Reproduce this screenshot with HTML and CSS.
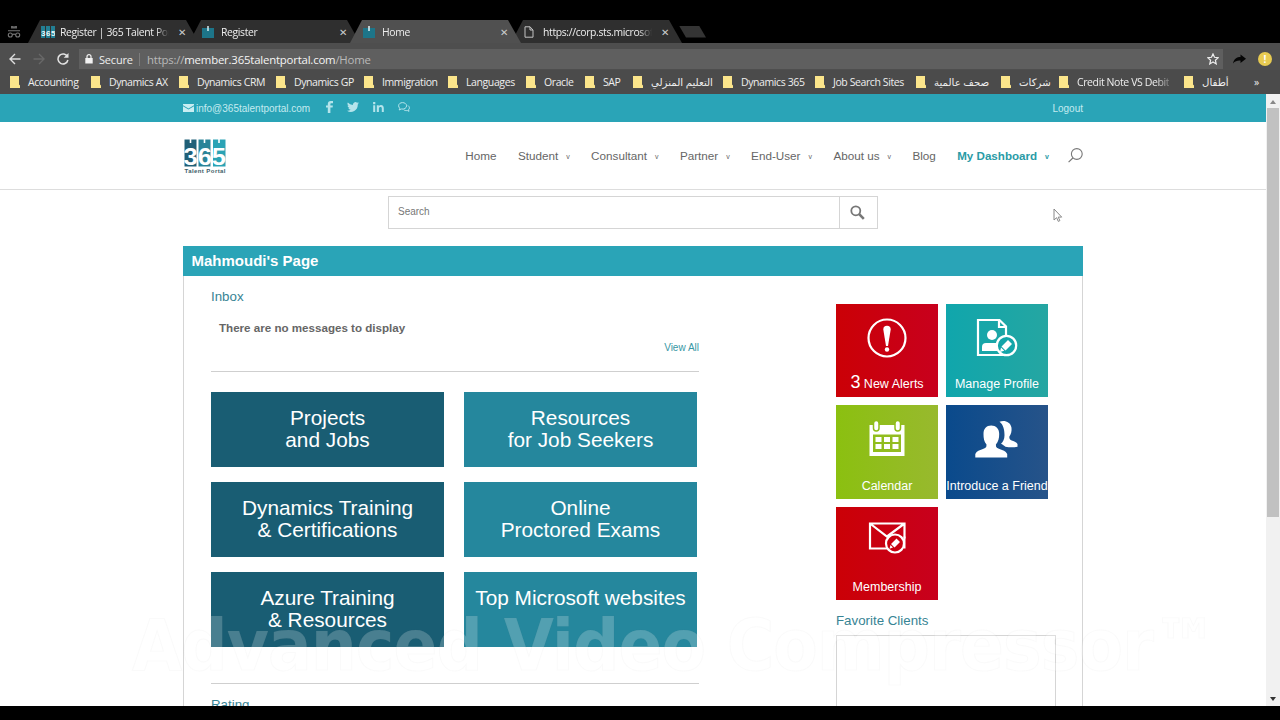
FILE: index.html
```html
<!DOCTYPE html>
<html lang="en">
<head>
    <meta charset="UTF-8">
    <meta name="viewport" content="width=device-width, initial-scale=1.0">
    <title>365 Talent Portal - Home</title>
    <link rel="stylesheet" href="styles.css">
</head>
<body>
    <div class="tabs">
        <svg class="incognito" width="14" height="14" viewBox="0 0 14 14" fill="none" stroke="#777" stroke-width="1.1"><path d="M4 1h2l1 .5L8 1h2v2.5H4z" fill="#666" stroke="none"/><path d="M1 5.8h12M5.2 9.6q1.800-1 3.600 0"/><circle cx="3.300" cy="10" r="2"/><circle cx="10.700" cy="10" r="2"/></svg>
        <div class="tab">
            <svg width="14" height="12" viewBox="0 0 14 12"><path fill="#237f94" d="M0 0h4v12H0zM5 0h4v12H5zM10 0h4v12h-4z"/><text x="0" y="10" class="fav-text" textLength="14">365</text></svg>
            <span class="tab-title">Register | 365 Talent Portal</span><span class="close">✕</span>
        </div>
        <div class="tab">
            <svg width="12" height="12" viewBox="0 0 12 12"><path fill="#1d7589" d="M0 2h12v10H0z"/><path stroke="#d6eef2" stroke-width="1.500" d="M6 0v5"/></svg>
            <span class="tab-title">Register</span><span class="close">✕</span>
        </div>
        <div class="tab active">
            <svg width="12" height="12" viewBox="0 0 12 12"><path fill="#1d7589" d="M0 2h12v10H0z"/><path stroke="#e6f6f8" stroke-width="1.500" d="M6 0v5"/></svg>
            <span class="tab-title">Home</span><span class="close">✕</span>
        </div>
        <div class="tab">
            <svg width="10" height="12" viewBox="0 0 10 12" fill="none" stroke="#c4c4c4"><path d="M1 .8h5L9 4v7.200H1zM6 .8V4h3"/></svg>
            <span class="tab-title">https://corp.sts.microsoft</span><span class="close">✕</span>
        </div>
        <div class="new-tab"></div>
    </div>

    <div class="toolbar">
        <svg width="12" height="12" viewBox="0 0 12 12" fill="none" stroke="#ddd" stroke-width="1.400"><path d="M11.500 6H1M6 1L1 6l5 5"/></svg>
        <svg width="12" height="12" viewBox="0 0 12 12" fill="none" stroke="#686868" stroke-width="1.400"><path d="M.5 6H11M6 1l5 5-5 5"/></svg>
        <svg width="12" height="12" viewBox="0 0 12 12" fill="none" stroke="#e2e2e2" stroke-width="1.500"><path d="M10.500 3.800A5 5 0 1 0 10.900 7"/><path d="M11.500 0v4.800H6.700z" fill="#e2e2e2" stroke="none"/></svg>
        <div class="address">
            <svg width="8" height="10" viewBox="0 0 8 10"><path fill="#f2f2f2" d="M.3 4h7.400v5.500H.3z"/><path fill="none" stroke="#f2f2f2" stroke-width="1.200" d="M2 4V2.600a2 2 0 0 1 4 0V4"/></svg>
            <span class="secure">Secure</span>
            <span class="url"><i>https://</i>member.365talentportal.com<i>/Home</i></span>
            <svg class="star" width="12" height="12" viewBox="0 0 12 12" fill="none" stroke="#eee" stroke-width="1.200"><path d="M6 .9l1.500 3.400 3.700.4-2.800 2.500.8 3.700L6 9l-3.200 1.900.8-3.700L.8 4.700l3.700-.4z"/></svg>
        </div>
        <svg class="share" width="13" height="10" viewBox="0 0 13 10"><path fill="#050505" d="M0 9.500C1 4.500 4 3 7.500 3V.5l5.500 4.200L7.500 9V6.500C4.500 6.300 2 7 0 9.500z"/></svg>
        <div class="warn">!</div>
    </div>

    <div class="bookmarks">
        <div class="bookmark"><span>Accounting</span></div>
        <div class="bookmark"><span>Dynamics AX</span></div>
        <div class="bookmark"><span>Dynamics CRM</span></div>
        <div class="bookmark"><span>Dynamics GP</span></div>
        <div class="bookmark"><span>Immigration</span></div>
        <div class="bookmark"><span>Languages</span></div>
        <div class="bookmark"><span>Oracle</span></div>
        <div class="bookmark"><span>SAP</span></div>
        <div class="bookmark"><span lang="ar">التعليم المنزلي</span></div>
        <div class="bookmark"><span>Dynamics 365</span></div>
        <div class="bookmark"><span>Job Search Sites</span></div>
        <div class="bookmark"><span lang="ar">صحف عالمية</span></div>
        <div class="bookmark"><span lang="ar">شركات</span></div>
        <div class="bookmark faded"><span>Credit Note VS Debit</span></div>
        <div class="bookmark"><span lang="ar">أطفال</span></div>
        <div class="more">»</div>
    </div>

    <div class="viewport">
        <div class="page">
            <div class="top-bar">
                <svg width="11" height="8" viewBox="0 0 11 8"><path fill="#c9edf2" d="M0 0h11v1.200L5.500 4.500 0 1.200zM0 2.300l5.500 3.300L11 2.300V8H0z"/></svg>
                <span class="email">info@365talentportal.com</span>
                <div class="social">
                    <svg width="7" height="12" viewBox="0 0 7 12"><path fill="#b5e4eb" d="M1.800 12V6.600H0V4.400h1.800V3C1.800 1 2.900 0 4.700 0H7v2.200H5.400c-.8 0-1 .4-1 1v1.200h2.500l-.3 2.200H4.400V12z"/></svg>
                    <svg width="12" height="10" viewBox="0 0 24 20"><path fill="#b5e4eb" d="M24 2.400a10 10 0 0 1-2.800.8A5 5 0 0 0 23.300.5a10 10 0 0 1-3.100 1.200A5 5 0 0 0 11.800 6 14 14 0 0 1 1.700.9a5 5 0 0 0 1.500 6.600A5 5 0 0 1 1 6.900a5 5 0 0 0 3.900 4.900 5 5 0 0 1-2.200.1 5 5 0 0 0 4.600 3.400A10 10 0 0 1 0 17.500 14 14 0 0 0 21.500 5z"/></svg>
                    <svg width="11" height="10" viewBox="0 0 11 10"><path fill="#b5e4eb" d="M.2 3.300h2V10h-2zM.1 0h2.200v2.200H.1zM3.800 3.300h2v1C6.300 3.500 7 3.100 8 3.100c2 0 2.800 1.300 2.800 3.200V10h-2V6.600c0-1-.3-1.700-1.300-1.700S5.900 5.600 5.900 6.600V10H3.800z"/></svg>
                    <svg width="12" height="10" viewBox="0 0 12 10" fill="none" stroke="#b5e4eb"><path d="M4.500.6C2.300.6.6 2 .6 3.800c0 1 .5 1.800 1.200 2.400L1.200 8l2-1c3 .5 5.400-.9 5.400-3.200C8.600 2 6.700.6 4.500.6z"/><path d="M10 3.500c1.800 1.400 1.800 3.200.5 4.300l.5 1.500-1.700-.8c-1.600.3-2.700 0-3.600-.8"/></svg>
                </div>
                <span class="logout">Logout</span>
            </div>

            <header>
                <svg class="logo" width="44" height="38" viewBox="0 0 44 38">
                    <path fill="#206078" d="M1.500 2.500h12v27h-12z"/>
                    <path fill="#2a8498" d="M15.500 2.500h12v27h-12z"/>
                    <path fill="#2ba3b5" d="M30 2.500h12.500v27H30z"/>
                    <path stroke="#fff" stroke-width="1.600" d="M7.500 1v5M21.500 1v5M36 1v5"/>
                    <text class="logo-num" x="0.500" y="27.500" textLength="42.500" lengthAdjust="spacingAndGlyphs">365</text>
                    <text class="logo-name" x="1.500" y="35.500" textLength="41">Talent Portal</text>
                </svg>
                <nav>
                    <ul>
                        <li><a>Home</a></li>
                        <li class="sub"><a>Student</a></li>
                        <li class="sub"><a>Consultant</a></li>
                        <li class="sub"><a>Partner</a></li>
                        <li class="sub"><a>End-User</a></li>
                        <li class="sub"><a>About us</a></li>
                        <li><a>Blog</a></li>
                        <li class="sub current"><a>My Dashboard</a></li>
                    </ul>
                </nav>
                <svg width="15" height="15" viewBox="0 0 15 15" fill="none" stroke="#777" stroke-width="1.100"><circle cx="8.800" cy="6" r="5.400"/><path d="M4.800 10L.6 14.200"/></svg>
            </header>

            <div class="search">
                <span class="search-input">Search</span>
                <div class="search-button">
                    <svg width="15" height="15" viewBox="0 0 15 15" fill="none" stroke="#777"><circle cx="5.800" cy="5.800" r="4.500" stroke-width="1.800"/><path stroke-width="2.600" d="M9.200 9.200l4.600 4.600"/></svg>
                </div>
            </div>

            <main>
                <h1>Mahmoudi's Page</h1>
                <div class="panel">
                    <div class="left">
                        <h2>Inbox</h2>
                        <p class="no-messages">There are no messages to display</p>
                        <a class="view-all">View All</a>
                        <div class="links">
                            <a class="dark">Projects<br>and Jobs</a>
                            <a>Resources<br>for Job Seekers</a>
                            <a class="dark">Dynamics Training<br>&amp; Certifications</a>
                            <a>Online<br>Proctored Exams</a>
                            <a class="dark">Azure Training<br>&amp; Resources</a>
                            <a>Top Microsoft websites</a>
                        </div>
                        <h2>Rating</h2>
                    </div>
                    <div class="right">
                        <div class="tiles">
                            <a class="tile red">
                                <svg width="44" height="42" viewBox="0 0 44 42"><circle cx="22" cy="21" r="18.500" fill="none" stroke="#fff" stroke-width="2.200"/><path fill="#fff" d="M18.300 12.500a3.700 3.700 0 0 1 7.400 0L23 29h-2z"/><circle cx="22" cy="32.500" r="2.200" fill="#fff"/></svg>
                                <span><b>3</b> New Alerts</span>
                            </a>
                            <a class="tile teal">
                                <svg width="44" height="42" viewBox="0 0 44 42"><path fill="none" stroke="#fff" stroke-width="2.200" d="M31 20V9.500L24.500 3H3v35h29M24 3v7h7"/><circle cx="17" cy="18" r="5" fill="#fff"/><path fill="#fff" d="M7 34v-4q0-4 4-4h11v8z"/><circle cx="31.500" cy="28.500" r="9.700" fill="#13a5a9" stroke="#fff" stroke-width="2.200"/><path fill="#fff" d="M33 23l4 4-6.500 6.500-4-4zM26 30.500l3.300 3.300-4.300 1.200z"/></svg>
                                <span>Manage Profile</span>
                            </a>
                            <a class="tile green">
                                <svg width="44" height="42" viewBox="0 0 44 42"><path fill="#fff" fill-rule="evenodd" d="M4.500 7h35v31h-35zM8 16.500V34h28V16.500z"/><path fill="#fff" d="M10.500 19h6v5h-6zM19 19h6v5h-6zM27.500 19h6v5h-6zM10.500 26h6v5h-6zM19 26h6v5h-6zM27.500 26h6v5h-6z"/><rect x="8.500" y="2.500" width="5.500" height="10.500" rx="2.700" fill="#fff" stroke="#8fbd18" stroke-width="1.500"/><rect x="30" y="2.500" width="5.500" height="10.500" rx="2.700" fill="#fff" stroke="#8fbd18" stroke-width="1.500"/></svg>
                                <span>Calendar</span>
                            </a>
                            <a class="tile blue">
                                <svg width="44" height="42" viewBox="0 0 44 42"><path fill="#fff" d="M24.500 3.800c4.500-2 11-.3 12 6 .4 3.500-.5 6.500-2.200 9-.5 5 6.200 3.500 8.200 7.200v2.700c-4 .8-8 .8-12 0-2-1.500-3-2.200-4.500-3 2-2 3.500-4.500 3.500-8.500 0-5-1-10.500-5-13.400z"/><path fill="#fff" d="M8.500 16C8.500 10.500 11.500 7.500 16.200 7.500s8 3 8 8.500c0 4-.8 7.500-3.300 10.500-.8 6 8.300 3.500 11.300 9.500v3.500H.3V36c3-6 12-3.500 11.200-9.500-2.500-3-3-6.500-3-10.500z"/></svg>
                                <span>Introduce a Friend</span>
                            </a>
                            <a class="tile red">
                                <svg width="44" height="42" viewBox="0 0 44 42"><g transform="translate(0 -1.500)"><path fill="none" stroke="#fff" stroke-width="2.200" d="M39.500 20V5H5v25h18M5 5l17 13L39.500 5"/><path stroke="#fff" stroke-width="2" d="M39.500 18v12"/><circle cx="30" cy="25" r="9" fill="#c90010" stroke="#fff" stroke-width="2.200"/><path fill="#fff" d="M31.500 20l3.500 3.500-5.500 5.500L26 25.500zM25.500 26.500l2.500 2.500-3.500 1.200z"/></g></svg>
                                <span>Membership</span>
                            </a>
                        </div>
                        <h2>Favorite Clients</h2>
                        <div class="clients"></div>
                    </div>
                </div>
            </main>
        </div>
        <div class="scrollbar">
            <i class="up"></i>
            <div class="thumb"></div>
            <i class="down"></i>
        </div>
    </div>

    <svg class="cursor" width="10" height="15" viewBox="0 0 10 15"><path fill="#fff" stroke="#888" d="M1 1v11l2.600-2.300 1.700 3.700 1.600-.8-1.700-3.500h3.500z"/></svg>
    <div class="watermark">Advanced Video Compressor™</div>
</body>
</html>
```

FILE: styles.css
```css
* { margin: 0; padding: 0; box-sizing: border-box; }
body {
    width: 1280px;
    height: 720px;
    padding: 20px 0 14px;
    display: flex;
    flex-direction: column;
    overflow: hidden;
    background-color: #000;
    color: #666;
    font-family: "Liberation Sans", Arial, sans-serif;
    position: relative;
}
svg { display: block; flex-shrink: 0; }

/* Browser window */
.tabs, .toolbar, .bookmarks {
    display: flex;
    align-items: center;
    flex-shrink: 0;
    font-family: "Open Sans", "Noto Sans", "DejaVu Sans", sans-serif;
    color: #eee;
}
.tabs { height: 23px; padding-left: 7px; }
.incognito { margin-right: 7px; }
.tab {
    width: 171px;
    height: 23px;
    margin-right: -10px;
    padding: 0 13px 0 13px;
    display: flex;
    align-items: center;
    background-color: #2f2f2f;
    clip-path: polygon(0 100%, 12px 0, 158px 0, 100% 100%);
    font-size: 10.4px;
    letter-spacing: -0.35px;
}
.tab.active { background-color: #505050; z-index: 1; }
.tab svg { margin-right: auto; }
.fav-text { font: bold 8px "Liberation Sans", sans-serif; fill: #e9f8fa; }
.tab-title {
    width: 109px;
    overflow: hidden;
    white-space: nowrap;
    -webkit-mask-image: linear-gradient(to right, #000 88%, transparent);
    mask-image: linear-gradient(to right, #000 88%, transparent);
}
.close { width: 17px; text-align: right; font-size: 10px; color: #ccc; }
.new-tab {
    width: 27px;
    height: 12px;
    margin-left: 7px;
    background-color: #343434;
    clip-path: polygon(0 0, 20px 0, 100% 100%, 7px 100%);
}
.toolbar {
    height: 27px;
    padding: 5px 8px 0 9px;
    background-color: #4e4e4e;
    gap: 12px;
}
.address {
    width: 1144px;
    height: 20px;
    margin-left: -2px;
    padding: 0 4px 0 6px;
    display: flex;
    align-items: center;
    background-color: #5f5f5f;
    font-size: 11.4px;
    letter-spacing: -0.2px;
}
.secure {
    width: 41px;
    margin-left: 6px;
    border-right: 1px solid #7d7d7d;
    line-height: 13px;
    font-size: 11px;
}
.url { margin-left: 7px; color: #f4f4f4; }
.url i { font-style: normal; color: #b9b9b9; }
.star { margin-left: auto; }
.share { margin-left: -2px; }
.warn {
    width: 14px;
    height: 14px;
    border-radius: 50%;
    background-color: #e8cb52;
    color: #fff;
    font-size: 10px;
    font-weight: bold;
    line-height: 14px;
    text-align: center;
}
.bookmarks {
    height: 24px;
    padding-left: 10px;
    background-color: #4b4b4b;
    font-size: 10.5px;
    letter-spacing: -0.4px;
}
.bookmark {
    width: 97px;
    flex-shrink: 0;
    display: flex;
    align-items: center;
    white-space: nowrap;
}
.bookmark [lang="ar"] { font-size: 10.2px; letter-spacing: 0; }
.bookmark::before {
    content: "";
    width: 10px;
    height: 12px;
    margin-right: 8px;
    background-color: #fbe58b;
    clip-path: polygon(0 0, 90% 0, 90% 70%, 100% 80%, 100% 100%, 0 100%);
}
.bookmark:nth-child(1) { width: 81px; }
.bookmark:nth-child(2),
.bookmark:nth-child(4) { width: 88px; }
.bookmark:nth-child(5) { width: 84px; }
.bookmark:nth-child(6) { width: 78px; }
.bookmark:nth-child(7) { width: 59px; }
.bookmark:nth-child(8) { width: 48px; }
.bookmark:nth-child(9) { width: 90px; }
.bookmark:nth-child(10) { width: 92px; }
.bookmark:nth-child(11) { width: 101px; }
.bookmark:nth-child(12) { width: 85px; }
.bookmark:nth-child(13) { width: 58px; }
.bookmark:nth-child(14) { width: 125px; }
.bookmark:nth-child(15) { width: 70px; }
.faded span {
    -webkit-mask-image: linear-gradient(to right, #000 85%, rgba(0, 0, 0, 0.3));
    mask-image: linear-gradient(to right, #000 85%, rgba(0, 0, 0, 0.3));
}

/* Page and scrollbar */
.viewport { height: 612px; display: flex; background-color: #fff; }
.page { width: 1266px; height: 612px; overflow: hidden; }
.scrollbar {
    width: 14px;
    display: flex;
    flex-direction: column;
    align-items: center;
    background-color: #f1f1f1;
}
.thumb { width: 12px; height: 409px; background-color: #c1c1c1; }
.up, .down { border: 3px solid transparent; }
.up { margin: 3px 0 4px; border-bottom: 4px solid #888; }
.down { margin: auto 0 2px; border-top: 4px solid #333; }

.top-bar {
    height: 28px;
    padding: 0 183px;
    display: flex;
    align-items: center;
    background-color: #2aa4b7;
    color: #c4ebf0;
    font-size: 10px;
}
.email { margin-left: 2px; }
.social {
    margin-left: 16px;
    padding-bottom: 2px;
    display: flex;
    align-items: center;
    gap: 14px;
}
.logout { margin-left: auto; }
header {
    height: 68px;
    padding: 0 183px;
    display: flex;
    align-items: center;
    border-bottom: 1px solid #ddd;
}
.logo-num { font: bold 24px "Liberation Sans", sans-serif; fill: #fff; }
.logo-name { font: bold 6px "Liberation Sans", sans-serif; fill: #3c5d68; }
nav { margin-left: auto; }
nav ul {
    display: flex;
    align-items: baseline;
    list-style: none;
    gap: 21.4px;
    margin-right: 19px;
    padding-bottom: 1px;
    font-size: 11.7px;
    white-space: nowrap;
}
.sub::after {
    content: "v";
    margin-left: 8px;
    font-size: 7px;
    position: relative;
    top: -1px;
}
.current { color: #2a9ba6; font-weight: bold; font-size: 11.6px; }
.search {
    width: 490px;
    height: 33px;
    margin: 6px 0 17px 388px;
    display: flex;
    border: 1px solid #d5d5d5;
    font-size: 10px;
}
.search-input { flex: 1; padding: 9px; color: #777; }
.search-button {
    width: 38px;
    display: flex;
    align-items: center;
    justify-content: center;
    border-left: 1px solid #d5d5d5;
}
.search-button svg { margin-right: 2px; }

main { width: 900px; margin: 0 auto; }
h1 {
    height: 30px;
    padding-left: 8.5px;
    background-color: #2aa4b7;
    color: #fff;
    font-size: 15px;
    line-height: 30px;
}
.panel {
    height: 450px;
    padding: 11px 26px 0 27px;
    display: flex;
    justify-content: space-between;
    border: 1px solid #d5d5d5;
    border-top: none;
}
h2 {
    color: #378494;
    font-size: 13.3px;
    font-weight: normal;
    line-height: 18px;
}
.left { width: 488px; padding-top: 1px; }
.no-messages {
    margin: 15px 0 7px 8px;
    font-size: 11.6px;
    font-weight: bold;
    line-height: 14px;
}
.view-all {
    display: block;
    padding-bottom: 17px;
    border-bottom: 1px solid #cfcfcf;
    color: #3797a5;
    font-size: 10px;
    line-height: 12px;
    text-align: right;
}
.links {
    margin-bottom: 12px;
    padding: 19.5px 0 36px;
    display: grid;
    grid-template-columns: 233px 233px;
    gap: 15px 20px;
    border-bottom: 1px solid #cfcfcf;
}
.links a {
    height: 75px;
    padding-top: 15px;
    background-color: #25879d;
    color: #fff;
    font-size: 20.8px;
    line-height: 22px;
    text-align: center;
    white-space: nowrap;
}
.links .dark { background-color: #195d73; }
.right { width: 220px; padding-top: 16.5px; }
.tiles {
    display: grid;
    grid-template-columns: 102px 102px;
    gap: 8px;
    margin-bottom: 12px;
}
.tile {
    height: 93.6px;
    padding: 13px 0 4px;
    display: flex;
    flex-direction: column;
    align-items: center;
    justify-content: space-between;
    color: #fff;
    font-size: 12.5px;
    line-height: 18px;
    white-space: nowrap;
}
.tile b { font-size: 18px; font-weight: normal; line-height: 16px; }
.red { background: linear-gradient(to right, #cb0006, #c8001d); }
.teal { background: linear-gradient(to right, #10a6ac, #25a6a2); }
.green { background: linear-gradient(to right, #8bc010, #98b92e); }
.blue { background: linear-gradient(to right, #0a4a8c, #265389); }
.clients { height: 90px; margin-top: 5px; border: 1px solid #d5d5d5; }

/* Overlays */
.cursor { position: absolute; left: 1053px; top: 208px; }
.watermark {
    position: absolute;
    left: 132px;
    top: 603px;
    color: rgba(255, 255, 255, 0.21);
    font: bold 72px/84px "DejaVu Sans Condensed", "DejaVu Sans", sans-serif;
    letter-spacing: -0.9px;
    white-space: nowrap;
    -webkit-text-stroke: 1px rgba(120, 110, 100, 0.035);
}
```
